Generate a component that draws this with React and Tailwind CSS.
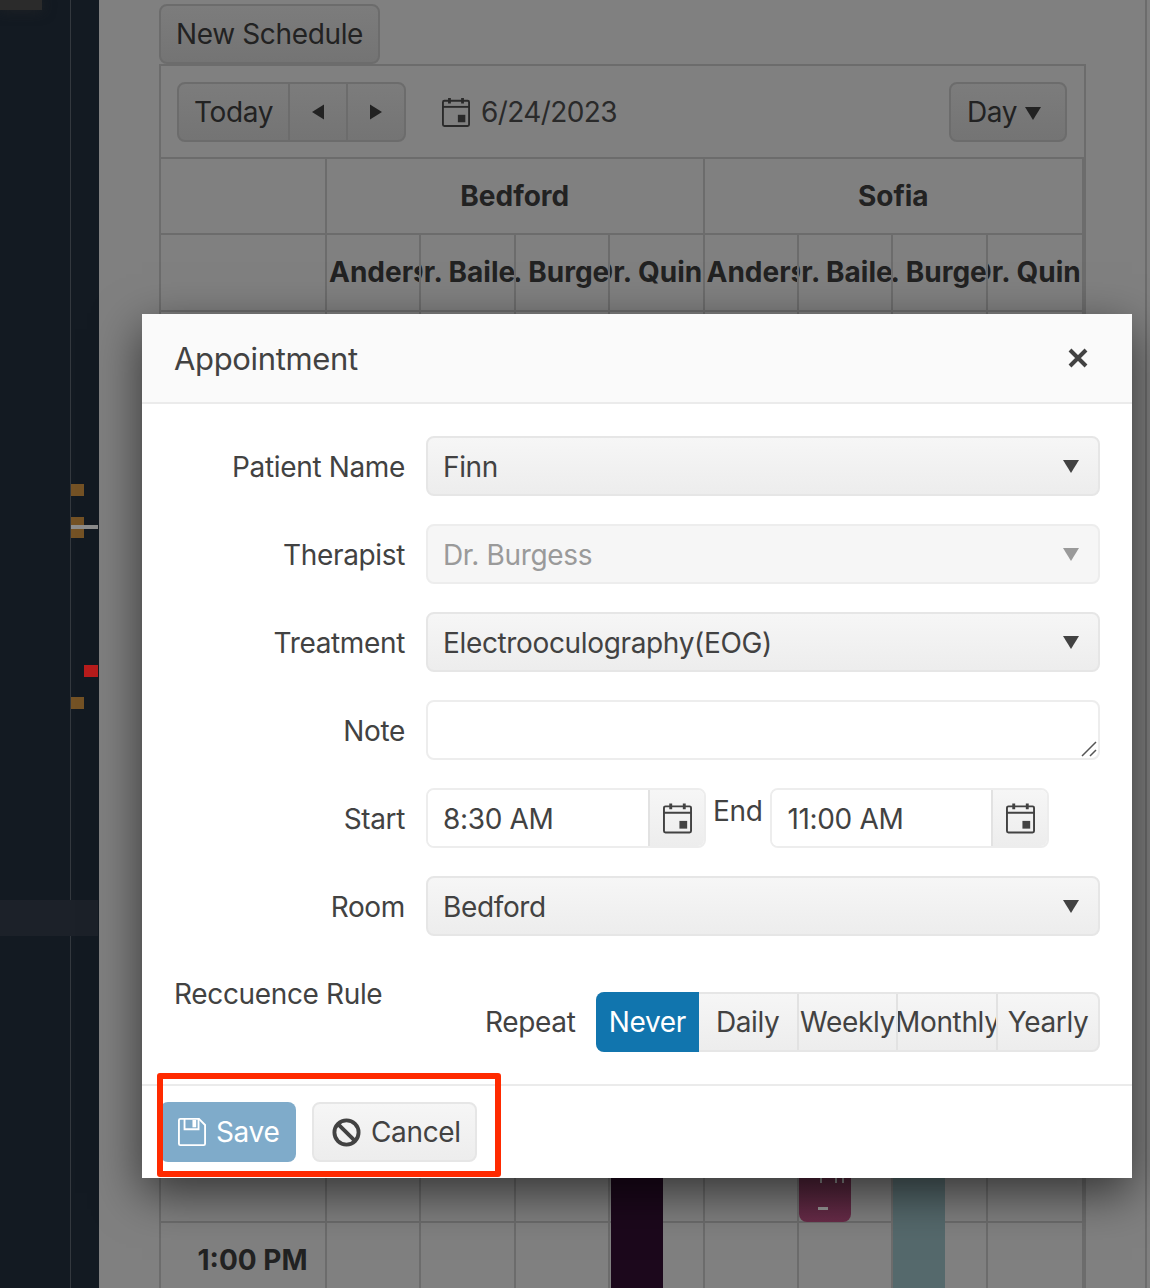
const SUB_COLUMNS = [
  { name: 'Anderson', start: true },
  { name: 'Dr. Bailey' },
  { name: 'Dr. Burgess' },
  { name: 'Dr. Quinn' },
];

const REPEAT_OPTIONS = ['Daily', 'Weekly', 'Monthly', 'Yearly'];

const softButton =
  'rounded-lg border-2 border-[#e6e6e6] bg-linear-to-b from-[#f6f6f6] to-[#ededed] text-[#424242]';

const darkButton = 'rounded-lg border-2 border-[#6c6c6c] bg-linear-to-b from-[#7c7c7c] to-[#747474] text-[#222]';

function CalendarIcon({ className }) {
  return (
    <svg viewBox="0 0 30 32" className={className} fill="none" stroke="currentColor">
      <rect x="1" y="4" width="28" height="27" rx="1.5" strokeWidth="2" />
      <path d="M1 10.5h28" strokeWidth="2" />
      <path d="M8 1v6M22 1v6" strokeWidth="3" />
      <rect x="17" y="19" width="8" height="8" fill="currentColor" stroke="none" />
    </svg>
  );
}

function CaretDown({ className }) {
  return (
    <svg viewBox="0 0 16 13" className={className} fill="currentColor">
      <path d="M0 0h16L8 13z" />
    </svg>
  );
}

function SaveIcon({ className }) {
  return (
    <svg viewBox="0 0 30 30" className={className} fill="none" stroke="currentColor" strokeWidth="2">
      <path d="M2.5 1h20l6.5 6.5v20a1.5 1.5 0 0 1-1.500 1.500h-25a1.500 1.500 0 0 1-1.500-1.500v-25a1.500 1.500 0 0 1 1.500-1.500z" />
      <path d="M7 1v11h15V1" />
      <rect x="15.500" y="2" width="4" height="8" fill="currentColor" stroke="none" />
    </svg>
  );
}

function BanIcon({ className }) {
  return (
    <svg viewBox="0 0 30 30" className={className} fill="none" stroke="currentColor" strokeWidth="4">
      <circle cx="15" cy="15" r="12.500" />
      <path d="M6.500 6.500l17 17" />
    </svg>
  );
}

function Sidebar() {
  return (
    <div className="relative w-[99px] shrink-0 bg-[#131a22]">
      <div className="absolute left-0 top-0 h-[10px] w-[42px] bg-[#2b2b2b] shadow-[0_0_14px_rgba(40,40,40,0.7)]" />
      <div className="absolute left-[70px] top-0 h-full w-px bg-[#33383e]" />
      <div className="absolute left-0 top-[900px] h-[36px] w-[98px] bg-[#1c2129]" />
      <div className="absolute left-[71px] top-[484px] h-[12px] w-[13px] bg-[#745225]" />
      <div className="absolute left-[71px] top-[517px] h-[21px] w-[13px] bg-[#745225]" />
      <div className="absolute left-[71px] top-[525px] h-[4px] w-[27px] bg-[#8c8c8c]" />
      <div className="absolute left-[84px] top-[665px] h-[12px] w-[14px] bg-[#b81c1c]" />
      <div className="absolute left-[71px] top-[697px] h-[12px] w-[13px] bg-[#745225]" />
    </div>
  );
}

function HeaderCells() {
  return (
    <div className="grid h-[77px] grid-cols-[166px_repeat(8,1fr)] border-b-2 border-[#6c6c6c]">
      <div className="border-r-2 border-[#6c6c6c]" />
      {[...SUB_COLUMNS, ...SUB_COLUMNS].map((col, i) => (
        <div
          key={i}
          className={`flex items-center overflow-hidden border-r-2 border-[#6c6c6c] pb-[2px] last:border-r-0 ${col.start ? 'justify-start pl-[2px]' : 'justify-center'}`}
        >
          <span className="shrink-0 text-[28px] font-bold tracking-normal whitespace-nowrap text-[#222]">{col.name}</span>
        </div>
      ))}
    </div>
  );
}

function SlotCells({ className, label }) {
  return (
    <div className={`grid grid-cols-[166px_repeat(8,1fr)] ${className}`}>
      <div className="flex items-center justify-center border-r-2 border-[#6c6c6c] pl-[19px]">
        {label ? <span className="text-[28px] font-bold tracking-normal text-[#222]">{label}</span> : null}
      </div>
      {Array.from({ length: 8 }).map((_, i) => (
        <div key={i} className="border-r-2 border-[#6c6c6c] last:border-r-0" />
      ))}
    </div>
  );
}

function Schedule() {
  return (
    <div className="relative flex-1 bg-[#808080]">
      <div className="absolute right-[3px] top-0 h-full w-[2px] bg-[#6c6c6c]" />
      <div className="box-content w-[927px] pl-[60px] pt-[4px]">
        <button className={`h-[60px] w-[221px] text-[28px] ${darkButton}`}>New Schedule</button>
        <div className="border-2 border-b-0 border-[#6c6c6c]">
          <div className="flex h-[93px] items-center justify-between border-b-2 border-[#6c6c6c] pl-[16px] pr-[17px] pt-[1px]">
            <div className="flex items-center">
              <div className={`flex h-[60px] w-[229px] ${darkButton}`}>
                <span className="flex w-[111px] items-center justify-center border-r-2 border-[#6c6c6c] text-[28px]">Today</span>
                <span className="flex w-[58px] items-center justify-center border-r-2 border-[#6c6c6c]">
                  <CaretDown className="h-[12px] w-[16px] rotate-90" />
                </span>
                <span className="flex flex-1 items-center justify-center">
                  <CaretDown className="h-[12px] w-[16px] -rotate-90" />
                </span>
              </div>
              <div className="ml-[36px] flex items-center gap-[11px] text-[28px] tracking-[-0.6px] text-[#2a2a2a]">
                <CalendarIcon className="h-[30px] w-[28px]" />
                6/24/2023
              </div>
            </div>
            <div className={`flex h-[60px] w-[118px] items-center gap-[8px] pl-[16px] text-[28px] ${darkButton}`}>
              Day
              <CaretDown className="mt-[3px] h-[13px] w-[16px]" />
            </div>
          </div>
          <div className="border-r-2 border-[#6c6c6c]">
            <div className="grid h-[76px] grid-cols-[166px_1fr_1fr] border-b-2 border-[#6c6c6c]">
              <div className="border-r-2 border-[#6c6c6c]" />
              <div className="flex items-center justify-center border-r-2 border-[#6c6c6c] text-[28px] font-bold tracking-normal text-[#222]">Bedford</div>
              <div className="flex items-center justify-center text-[28px] font-bold tracking-normal text-[#222]">Sofia</div>
            </div>
            <HeaderCells />
            <SlotCells className="h-[911px] border-b-2 border-[#6c6c6c]" />
            <SlotCells className="h-[74px]" label="1:00 PM" />
          </div>
        </div>
      </div>
      {/* events peeking out under the dialog */}
      <div className="absolute left-[512px] top-[1170px] h-[118px] w-[52px] bg-[#1c081c]" />
      <div className="absolute left-[700px] top-[1170px] flex h-[52px] w-[52px] items-end rounded-b-lg bg-linear-to-b from-[#4e2338] to-[#692c49] pb-[12px] pl-[19px]">
        <div className="h-[3px] w-[10px] bg-[#999]" />
        <div className="absolute left-[21px] top-[8px] h-[5px] w-[2px] bg-[#8a8a8a]" />
        <div className="absolute left-[36px] top-[8px] h-[5px] w-[2px] bg-[#8a8a8a]" />
        <div className="absolute left-[43px] top-[8px] h-[5px] w-[2px] bg-[#8a8a8a]" />
      </div>
      <div className="absolute left-[794px] top-[1170px] h-[118px] w-[52px] bg-[#55696c]" />
    </div>
  );
}

function FormRow({ label, children }) {
  return (
    <div className="flex h-[60px] items-center">
      <label className="w-[231px] shrink-0 pt-[2px] text-right text-[28px] text-[#424242]">{label}</label>
      <div className="ml-[21px] flex-1">{children}</div>
    </div>
  );
}

function SelectBox({ value, disabled }) {
  return (
    <div
      className={
        disabled
          ? 'flex h-[60px] items-center justify-between rounded-lg border-2 border-[#ededed] bg-[#f6f6f6] pl-[15px] pr-[19px] text-[28px] text-[#9a9a9a]'
          : `flex h-[60px] items-center justify-between pl-[15px] pr-[19px] text-[28px] ${softButton}`
      }
    >
      <span className="pt-[2px]">{value}</span>
      <CaretDown className="h-[13px] w-[16px]" />
    </div>
  );
}

function TimeInput({ value, className }) {
  return (
    <div className={`flex h-[60px] overflow-hidden rounded-lg border-2 border-[#ededed] ${className}`}>
      <input
        readOnly
        value={value}
        className="min-w-0 flex-1 bg-white pl-[15px] pt-[2px] text-[28px] text-[#424242] outline-none"
      />
      <span className="flex w-[56px] items-center justify-center border-l-2 border-[#e2e2e2] bg-linear-to-b from-[#f6f6f6] to-[#ededed] text-[#424242]">
        <CalendarIcon className="h-[32px] w-[29px]" />
      </span>
    </div>
  );
}

function AppointmentDialog() {
  return (
    <div className="absolute left-[142px] top-[314px] h-[864px] w-[990px] bg-white shadow-[0_15px_45px_rgba(0,0,0,0.6)]">
      <div className="flex h-[90px] items-center justify-between border-b-2 border-[#ebebeb] bg-[#fafafa] pl-[32px] pr-[44px]">
        <span className="pt-[2px] text-[31px] text-[#424242]">Appointment</span>
        <svg viewBox="0 0 20 20" className="h-[20px] w-[20px] text-[#424242]" stroke="currentColor" strokeWidth="4">
          <path d="M2 2l16 16M18 2L2 18" />
        </svg>
      </div>
      <div className="flex flex-col gap-[28px] px-[32px] pt-[32px]">
        <FormRow label="Patient Name">
          <SelectBox value="Finn" />
        </FormRow>
        <FormRow label="Therapist">
          <SelectBox value="Dr. Burgess" disabled />
        </FormRow>
        <FormRow label="Treatment">
          <SelectBox value="Electrooculography(EOG)" />
        </FormRow>
        <FormRow label="Note">
          <div className="relative h-[60px]">
            <textarea
              readOnly
              className="block h-[60px] w-full resize-none rounded-lg border-2 border-[#ededed] bg-white outline-none"
            />
            <svg viewBox="0 0 16 16" className="absolute bottom-[3px] right-[3px] h-[16px] w-[16px] text-[#555]" stroke="currentColor" strokeWidth="1.500">
              <path d="M1 15L15 1M9 15l6-6" />
            </svg>
          </div>
        </FormRow>
        <FormRow label="Start">
          <div className="flex items-start">
            <TimeInput value="8:30 AM" className="w-[280px]" />
            <span className="ml-[7px] mt-[2px] text-[28px] text-[#424242]">End</span>
            <TimeInput value="11:00 AM" className="ml-[8px] w-[279px]" />
          </div>
        </FormRow>
        <FormRow label="Room">
          <SelectBox value="Bedford" />
        </FormRow>
      </div>
      <div className="relative mt-[27px] h-[123px] border-b-2 border-[#ebebeb] pl-[32px] pt-[10px]">
        <span className="text-[28px] text-[#424242]">Reccuence Rule</span>
        <div className="absolute left-[343px] top-[29px] flex items-center">
          <span className="w-[91px] text-[28px] text-[#424242]">Repeat</span>
          <div className="ml-[20px] flex h-[60px] w-[504px] rounded-lg border-2 border-[#e6e6e6] bg-linear-to-b from-[#f6f6f6] to-[#ededed] text-[28px] text-[#424242]">
            <span className="-my-[2px] -ml-[2px] flex w-[103px] items-center justify-center rounded-l-lg bg-[#1175ae] text-white">Never</span>
            {REPEAT_OPTIONS.map((option) => (
              <span
                key={option}
                className="flex w-[100px] items-center justify-center overflow-hidden border-r-2 border-[#e2e2e2] whitespace-nowrap last:border-r-0"
              >
                <span className="shrink-0">{option}</span>
              </span>
            ))}
          </div>
        </div>
      </div>
      <div className="flex gap-[16px] pl-[18px] pt-[16px]">
        <button className="flex h-[60px] w-[136px] items-center gap-[10px] rounded-lg bg-[#7fabca] pl-[18px] text-[28px] text-white">
          <SaveIcon className="h-[28px] w-[28px]" />
          Save
        </button>
        <button className={`flex h-[60px] w-[165px] items-center gap-[10px] pl-[18px] text-[28px] ${softButton}`}>
          <BanIcon className="h-[29px] w-[29px]" />
          Cancel
        </button>
      </div>
      {/* annotation box drawn on the screenshot */}
      <div className="absolute left-[15px] top-[759px] h-[104px] w-[344px] rounded-[3px] border-[6px] border-[#ff2a00]" />
    </div>
  );
}

export default function App() {
  return (
    <div className="relative flex h-[1288px] w-[1150px] overflow-hidden font-['Inter',sans-serif] tracking-[-0.35px]">
      <Sidebar />
      <Schedule />
      <AppointmentDialog />
    </div>
  );
}
